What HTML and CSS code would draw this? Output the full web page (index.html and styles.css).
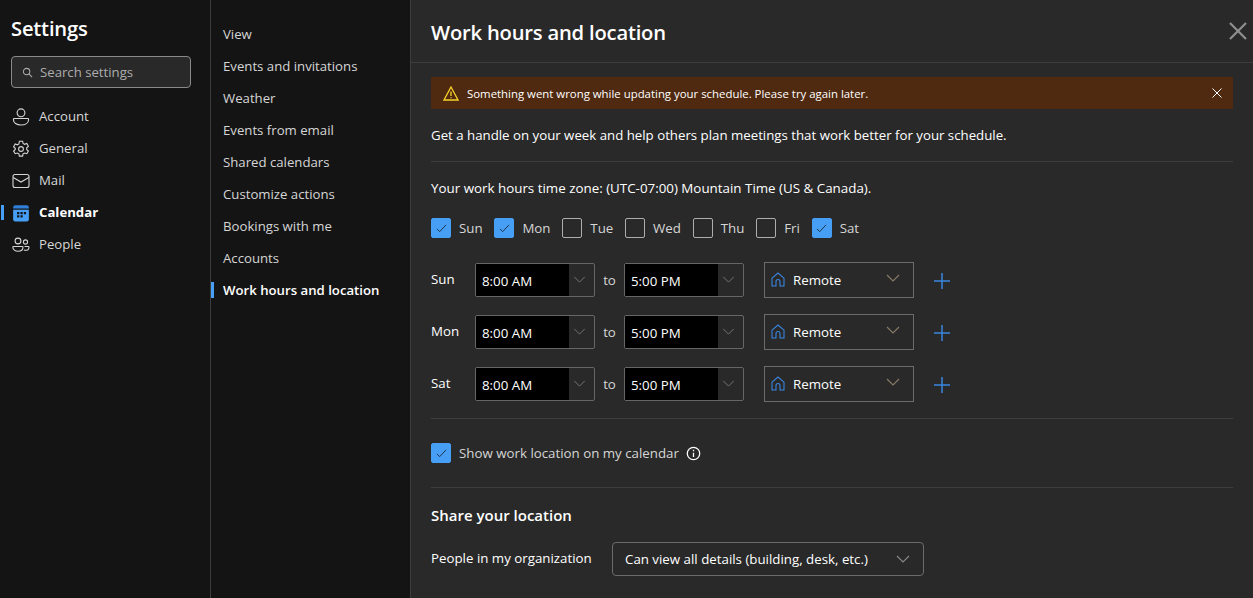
FILE: index.html
```html
<!DOCTYPE html>
<html lang="en">
<head>
<meta charset="utf-8">
<title>Settings</title>
<link rel="stylesheet" href="styles.css">
</head>
<body>
<div class="app">
  <aside class="side">
    <h1 class="side-title">Settings</h1>
    <div class="search">
      <svg class="search-ic" viewBox="0 0 12 12"><circle cx="5" cy="5" r="3.5"/><path d="M7.6 7.6 11 11"/></svg>
      <span>Search settings</span>
    </div>
    <nav class="side-nav">
      <a class="side-item"><svg class="ni" viewBox="0 0 18 18"><circle cx="9" cy="4.800" r="3.900"/><path d="M2.300 10.500h13.400a.9.900 0 0 1 .9.900c0 3.400-3.300 5.600-7.600 5.600s-7.600-2.200-7.600-5.600a.9.900 0 0 1 .9-.9z"/></svg>Account</a>
      <a class="side-item"><svg class="ni" viewBox="0 0 18 18"><circle cx="9" cy="9" r="2.400"/><path d="M7.400 1.200h3.200l.5 2.300 1.500.8 2.200-.8 1.600 2.800-1.700 1.500v1.600l1.700 1.600-1.600 2.700-2.200-.7-1.500.8-.5 2.300H7.400l-.5-2.300-1.500-.8-2.200.7-1.600-2.700 1.700-1.600V8.300L1.600 6.800l1.600-2.800 2.200.8 1.500-.8z"/></svg>General</a>
      <a class="side-item"><svg class="ni" viewBox="0 0 18 18"><rect x="1" y="2.500" width="16" height="13" rx="2"/><path d="m1.200 5.500 7.800 4.500 7.800-4.500"/></svg>Mail</a>
      <a class="side-item active"><svg class="ni-cal" viewBox="0 0 16 16"><path class="cal-top" d="M1 3a2 2 0 0 1 2-2h10a2 2 0 0 1 2 2v1H1z"/><path class="cal-bot" d="M1 5h14v8.500a2 2 0 0 1-2 2H3a2 2 0 0 1-2-2z"/><path class="cal-dots" d="M4.500 7h2v2h-2zM7.500 7h2v2h-2zM10.500 7h2v2h-2zM4.500 10h2v2h-2zM7.500 10h2v2h-2z"/></svg>Calendar</a>
      <a class="side-item"><svg class="ni" viewBox="0 0 18 18"><circle cx="6" cy="5" r="2.900"/><circle cx="13.500" cy="6" r="2.100"/><path d="M1.500 10.500h8.800a.7.700 0 0 1 .7.700c0 2.400-2.200 4-5 4s-5.200-1.600-5.200-4a.7.700 0 0 1 .7-.7z"/><path d="M12.500 10.500h3.800a.7.700 0 0 1 .7.700c0 1.900-1.500 3.100-3.500 3.100-.6 0-1.100-.1-1.600-.2"/></svg>People</a>
    </nav>
  </aside>
  <nav class="mid">
    <a class="mid-item">View</a>
    <a class="mid-item">Events and invitations</a>
    <a class="mid-item">Weather</a>
    <a class="mid-item">Events from email</a>
    <a class="mid-item">Shared calendars</a>
    <a class="mid-item">Customize actions</a>
    <a class="mid-item">Bookings with me</a>
    <a class="mid-item">Accounts</a>
    <a class="mid-item active">Work hours and location</a>
  </nav>
  <main class="main">
    <header class="head">
      <h2 class="head-title">Work hours and location</h2>
      <svg class="head-close" viewBox="0 0 18 18"><path d="M1 1l16 16M17 1 1 17"/></svg>
    </header>
    <div class="body">
      <div class="banner">
        <svg class="warn" viewBox="0 0 16 15"><path d="M8 1 15 14H1z"/><path d="M8 5.500v4.500M8 11.300v1"/></svg>
        <span class="banner-text">Something went wrong while updating your schedule. Please try again later.</span>
        <svg class="banner-x" viewBox="0 0 10 10"><path d="m.5.500 9 9M9.500.500l-9 9"/></svg>
      </div>
      <p class="intro">Get a handle on your week and help others plan meetings that work better for your schedule.</p>
      <hr class="rule rule-intro">
      <p class="tz">Your work hours time zone: (UTC-07:00) Mountain Time (US &amp; Canada).</p>
      <div class="days">
        <label class="day"><span class="cb on"><svg viewBox="0 0 12 10"><path d="m1 5.500 3 3 7-7.500"/></svg></span>Sun</label>
        <label class="day"><span class="cb on"><svg viewBox="0 0 12 10"><path d="m1 5.500 3 3 7-7.500"/></svg></span>Mon</label>
        <label class="day"><span class="cb"></span>Tue</label>
        <label class="day"><span class="cb"></span>Wed</label>
        <label class="day"><span class="cb"></span>Thu</label>
        <label class="day"><span class="cb"></span>Fri</label>
        <label class="day"><span class="cb on"><svg viewBox="0 0 12 10"><path d="m1 5.500 3 3 7-7.500"/></svg></span>Sat</label>
      </div>
      <div class="rows">
        <div class="row">
          <span class="row-day">Sun</span>
          <div class="time"><span class="time-val">8:00 AM</span><span class="time-btn"><svg class="chev" viewBox="0 0 14 8"><path d="m1 1 6 6 6-6"/></svg></span></div>
          <span class="to">to</span>
          <div class="time"><span class="time-val">5:00 PM</span><span class="time-btn"><svg class="chev" viewBox="0 0 14 8"><path d="m1 1 6 6 6-6"/></svg></span></div>
          <div class="loc"><svg class="home" viewBox="0 0 14 15"><path d="M1 6.200 7 1l6 5.200V14H9V9.500a2 2 0 0 0-4 0V14H1z"/></svg><span class="loc-text">Remote</span><svg class="chev" viewBox="0 0 14 8"><path d="m1 1 6 6 6-6"/></svg></div>
          <svg class="plus" viewBox="0 0 16 16"><path d="M8 0v16M0 8h16"/></svg>
        </div>
        <div class="row">
          <span class="row-day">Mon</span>
          <div class="time"><span class="time-val">8:00 AM</span><span class="time-btn"><svg class="chev" viewBox="0 0 14 8"><path d="m1 1 6 6 6-6"/></svg></span></div>
          <span class="to">to</span>
          <div class="time"><span class="time-val">5:00 PM</span><span class="time-btn"><svg class="chev" viewBox="0 0 14 8"><path d="m1 1 6 6 6-6"/></svg></span></div>
          <div class="loc"><svg class="home" viewBox="0 0 14 15"><path d="M1 6.200 7 1l6 5.200V14H9V9.500a2 2 0 0 0-4 0V14H1z"/></svg><span class="loc-text">Remote</span><svg class="chev" viewBox="0 0 14 8"><path d="m1 1 6 6 6-6"/></svg></div>
          <svg class="plus" viewBox="0 0 16 16"><path d="M8 0v16M0 8h16"/></svg>
        </div>
        <div class="row">
          <span class="row-day">Sat</span>
          <div class="time"><span class="time-val">8:00 AM</span><span class="time-btn"><svg class="chev" viewBox="0 0 14 8"><path d="m1 1 6 6 6-6"/></svg></span></div>
          <span class="to">to</span>
          <div class="time"><span class="time-val">5:00 PM</span><span class="time-btn"><svg class="chev" viewBox="0 0 14 8"><path d="m1 1 6 6 6-6"/></svg></span></div>
          <div class="loc"><svg class="home" viewBox="0 0 14 15"><path d="M1 6.200 7 1l6 5.200V14H9V9.500a2 2 0 0 0-4 0V14H1z"/></svg><span class="loc-text">Remote</span><svg class="chev" viewBox="0 0 14 8"><path d="m1 1 6 6 6-6"/></svg></div>
          <svg class="plus" viewBox="0 0 16 16"><path d="M8 0v16M0 8h16"/></svg>
        </div>
      </div>
      <hr class="rule rule-rows">
      <div class="show">
        <span class="cb on"><svg viewBox="0 0 12 10"><path d="m1 5.500 3 3 7-7.500"/></svg></span>
        <span class="show-text">Show work location on my calendar</span>
        <svg class="info" viewBox="0 0 14 14"><circle cx="7" cy="7" r="5.800"/><path d="M7 6.200v4M7 3.600v1.200"/></svg>
      </div>
      <hr class="rule rule-show">
      <h3 class="share">Share your location</h3>
      <div class="org">
        <span class="org-label">People in my organization</span>
        <div class="org-select"><span>Can view all details (building, desk, etc.)</span><svg class="chev" viewBox="0 0 14 8"><path d="m1 1 6 6 6-6"/></svg></div>
      </div>
    </div>
  </main>
</div>
</body>
</html>
```
FILE: styles.css
```css
* { box-sizing: border-box; }
html, body { margin: 0; height: 100%; overflow: hidden; }
body {
  font-family: "Open Sans", "Noto Sans", sans-serif;
  font-size: 13.3px;
  color: #fff;
  background: #292929;
}
.app { display: flex; height: 598px; }

.side {
  width: 211px;
  flex: none;
  background: #141414;
  border-right: 1px solid #3d3d3d;
  padding: 14px 0 0 11px;
  font-size: 13.2px;
}
.side-title { margin: 0; font-size: 20.2px; line-height: 28px; font-weight: 600; letter-spacing: -.2px; }
.search {
  margin-top: 14px;
  width: 180px;
  height: 32px;
  border: 1px solid #8a8a8a;
  border-radius: 4px;
  background: #292929;
  display: flex;
  align-items: center;
  gap: 7px;
  padding-left: 10px;
  color: #adadad;
}
.search-ic { width: 11px; height: 11px; fill: none; stroke: #adadad; stroke-width: 1.1; }
.side-nav { margin-top: 13px; margin-left: -11px; }
.side-item {
  position: relative;
  display: flex;
  align-items: center;
  height: 32px;
  padding-left: 12px;
  gap: 9px;
  color: #d6d6d6;
  padding-bottom: 2px;
}
.ni { width: 18px; height: 18px; fill: none; stroke: #d6d6d6; stroke-width: 1.1; position: relative; top: 1px; }
.ni-cal { width: 18px; height: 18px; position: relative; top: 1px; }
.cal-top { fill: #2f80d8; }
.cal-bot { fill: #479ef5; }
.cal-dots { fill: #141414; }
.side-item.active { color: #fff; font-weight: 700; }
.side-item.active::before {
  content: "";
  position: absolute;
  left: 1px;
  top: 8px;
  width: 3px;
  height: 15px;
  background: #479ef5;
}

.mid {
  width: 200px;
  flex: none;
  background: #141414;
  border-right: 1px solid #3d3d3d;
  padding-top: 18px;
  font-size: 13.2px;
}
.mid-item {
  position: relative;
  display: flex;
  align-items: center;
  height: 32px;
  padding-left: 12px;
  color: #d6d6d6;
}
.mid-item.active { color: #fff; font-weight: 600; }
.mid-item.active::before {
  content: "";
  position: absolute;
  left: 0;
  top: 8px;
  width: 3px;
  height: 16px;
  background: #479ef5;
}

.main { flex: 1; min-width: 0; }
.head {
  height: 63px;
  border-bottom: 1px solid #3d3d3d;
  display: flex;
  align-items: center;
  justify-content: space-between;
  padding: 0 6px 0 20px;
}
.head-title { margin: 0; font-size: 20.2px; font-weight: 600; letter-spacing: -.2px; position: relative; top: .5px; }
.head-close { width: 18px; height: 18px; fill: none; stroke: #8f8f8f; stroke-width: 2.200; }

.body { padding: 14px 20px 0; }
.banner {
  height: 32px;
  background: #4f2a10;
  display: flex;
  align-items: center;
  padding: 0 11px 0 12px;
  font-size: 11.400px;
}
.warn { width: 16px; height: 15px; fill: none; stroke: #f8d22a; stroke-width: 1.300; margin-right: 8px; }
.banner-text { flex: 1; }
.banner-x { width: 10px; height: 10px; fill: none; stroke: #fff; stroke-width: 1; }
.intro { margin: 17px 0 0; line-height: 18px; font-size: 13.25px; }
.rule { border: 0; border-top: 1px solid #3d3d3d; margin: 0; }
.rule-intro { margin-top: 17px; }
.tz { margin: 17px 0 0; line-height: 18px; font-size: 13.360px; }

.days { display: flex; margin-top: 21px; height: 20px; }
.day { display: flex; align-items: center; color: #d6d6d6; gap: 8px; margin-right: 11.800px; }
.cb {
  width: 20px;
  height: 20px;
  flex: none;
  border: 1px solid #adadad;
  border-radius: 2px;
  display: flex;
  align-items: center;
  justify-content: center;
}
.cb.on { background: #479ef5; border-color: #479ef5; }
.cb svg { width: 11px; height: 9px; fill: none; stroke: #1a2a3a; stroke-width: 1; }

.rows { margin-top: 24px; display: flex; flex-direction: column; gap: 16px; }
.row { display: flex; align-items: center; height: 36px; }
.row-day { width: 44px; flex: none; position: relative; top: -1px; }
.time {
  width: 120px;
  height: 34px;
  flex: none;
  border: 1px solid #666;
  border-radius: 2px;
  display: flex;
  overflow: hidden;
}
.time-val { width: 93px; background: #000; padding: 1px 0 0 6px; display: flex; align-items: center; }
.time-btn { flex: 1; display: flex; align-items: center; justify-content: center; padding: 0 4px 2px 0; }
.time-btn .chev { stroke: #777; width: 13px; height: 7px; }
.to { width: 29px; flex: none; text-align: center; color: #d6d6d6; }
.chev { width: 14px; height: 8px; flex: none; fill: none; stroke: #8a8a8a; stroke-width: 1.100; }
.loc {
  margin-left: 20px;
  width: 150px;
  height: 36px;
  flex: none;
  border: 1px solid #6b6b6b;
  display: flex;
  align-items: center;
  padding: 0 13px 0 6px;
}
.loc .chev { position: relative; top: -2px; stroke: #8a7c68; }
.home { width: 14px; height: 15px; flex: none; fill: none; stroke: #3a86e0; stroke-width: 1.100; position: relative; top: -1px; }
.loc-text { flex: 1; margin-left: 8px; }
.plus { width: 16px; height: 16px; margin-left: 20px; fill: none; stroke: #3a86e0; stroke-width: 1.500; position: relative; top: 1px; }

.rule-rows { margin-top: 16px; }
.show { display: flex; align-items: center; margin-top: 24px; height: 20px; color: #d6d6d6; }
.show-text { margin-left: 8px; }
.info { width: 15px; height: 15px; margin-left: 7px; fill: none; stroke: #fff; stroke-width: 1.200; }
.rule-show { margin-top: 24px; }
.share { margin: 17px 0 0; font-size: 15px; line-height: 20px; font-weight: 600; }
.org { display: flex; align-items: center; margin-top: 17px; }
.org-label { width: 181px; flex: none; position: relative; top: -1px; }
.org-select {
  width: 312px;
  height: 34px;
  border: 1px solid #6b6b6b;
  border-radius: 4px;
  display: flex;
  align-items: center;
  justify-content: space-between;
  padding: 0 13px 0 12px;
}
```
